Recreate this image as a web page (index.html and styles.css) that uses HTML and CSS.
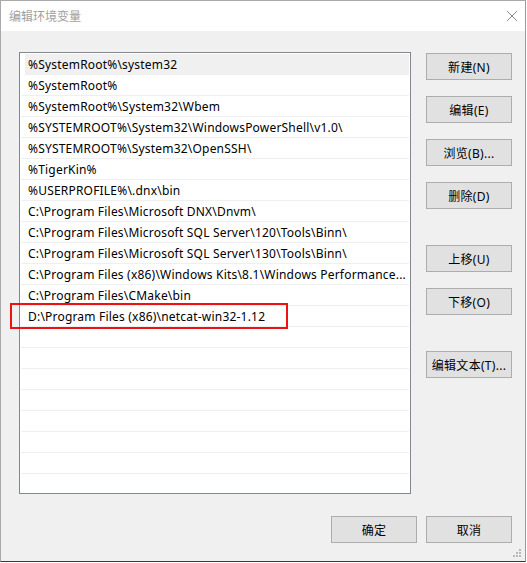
FILE: index.html
```html
<!DOCTYPE html>
<html lang="zh-CN">
<head>
<meta charset="utf-8">
<title>编辑环境变量</title>
<link rel="stylesheet" href="styles.css">
</head>
<body>
<div class="window">
  <div class="titlebar">
    <span class="title">编辑环境变量</span>
    <svg class="close" width="12" height="12" viewBox="0 0 12 12"><path d="M1 1 L11 11 M11 1 L1 11" stroke="#8a8a8a" stroke-width="1" fill="none"/></svg>
  </div>
  <div class="main">
    <div class="list">
      <div class="row selected">%SystemRoot%\system32</div>
      <div class="row">%SystemRoot%</div>
      <div class="row">%SystemRoot%\System32\Wbem</div>
      <div class="row">%SYSTEMROOT%\System32\WindowsPowerShell\v1.0\</div>
      <div class="row">%SYSTEMROOT%\System32\OpenSSH\</div>
      <div class="row">%TigerKin%</div>
      <div class="row">%USERPROFILE%\.dnx\bin</div>
      <div class="row">C:\Program Files\Microsoft DNX\Dnvm\</div>
      <div class="row">C:\Program Files\Microsoft SQL Server\120\Tools\Binn\</div>
      <div class="row">C:\Program Files\Microsoft SQL Server\130\Tools\Binn\</div>
      <div class="row">C:\Program Files (x86)\Windows Kits\8.1\Windows Performance...</div>
      <div class="row">C:\Program Files\CMake\bin</div>
      <div class="row">D:\Program Files (x86)\netcat-win32-1.12</div>
      <div class="row"></div>
      <div class="row"></div>
      <div class="row"></div>
      <div class="row"></div>
      <div class="row"></div>
      <div class="row"></div>
      <div class="row"></div>
      <div class="row"></div>
    </div>
    <div class="side">
      <button class="btn">新建(N)</button>
      <button class="btn">编辑(E)</button>
      <button class="btn">浏览(B)...</button>
      <button class="btn">删除(D)</button>
      <button class="btn far">上移(U)</button>
      <button class="btn">下移(O)</button>
      <button class="btn far">编辑文本(T)...</button>
    </div>
  </div>
  <div class="footer">
    <button class="btn">确定</button>
    <button class="btn">取消</button>
  </div>
  <div class="highlight"></div>
  <svg class="grip" width="10" height="10" viewBox="0 0 10 10">
    <rect x="6" y="0" width="2" height="2" fill="#b8b8b8"/>
    <rect x="3" y="3" width="2" height="2" fill="#b8b8b8"/>
    <rect x="6" y="3" width="2" height="2" fill="#b8b8b8"/>
    <rect x="0" y="6" width="2" height="2" fill="#b8b8b8"/>
    <rect x="3" y="6" width="2" height="2" fill="#b8b8b8"/>
    <rect x="6" y="6" width="2" height="2" fill="#b8b8b8"/>
  </svg>
</div>
</body>
</html>
```

FILE: styles.css
```css
html, body {
  margin: 0;
  padding: 0;
  background: #ffffff;
}

body {
  font-family: "Noto Sans", "Noto Sans CJK SC", sans-serif;
  font-size: 12px;
  color: #000;
}

.window {
  position: relative;
  box-sizing: border-box;
  width: 526px;
  height: 562px;
  border-left: 1px solid #a9a9a9;
  border-top: 1px solid #a9a9a9;
  border-right: 1px solid #9a9a9a;
  border-bottom: 1px solid #2e3b4b;
  background: #f0f0f0;
  display: flex;
  flex-direction: column;
  overflow: hidden;
}

.titlebar {
  height: 30px;
  background: #ffffff;
  display: flex;
  align-items: center;
  justify-content: space-between;
  padding: 0 8px 0 8px;
  flex-shrink: 0;
}

.title {
  color: #a0a0a0;
  font-family: "Noto Sans CJK SC", sans-serif;
  font-size: 12px;
  line-height: 14px;
}

.close {
  display: block;
  margin-right: -1px;
}

.main {
  display: flex;
  padding: 21px 0 0 18px;
}

.list {
  box-sizing: border-box;
  width: 392px;
  height: 442px;
  border: 1px solid #828790;
  background: #ffffff;
  overflow: hidden;
  padding: 1px 1px 0 1px;
}

.row {
  height: 20px;
  line-height: 21px;
  border-bottom: 1px solid #efefef;
  padding-left: 7px;
  white-space: nowrap;
  overflow: hidden;
  letter-spacing: 0.2px;
}

.row.selected {
  background: #f0f0f0;
  margin-left: 4px;
  padding-left: 3px;
}

.side {
  display: flex;
  flex-direction: column;
  margin-left: 15px;
  padding-top: 1px;
}

.btn {
  box-sizing: border-box;
  width: 86px;
  height: 27px;
  margin: 0 0 16px 0;
  padding: 0;
  border: 1px solid #adadad;
  background: #e1e1e1;
  font-family: "Noto Sans", "Noto Sans CJK SC", sans-serif;
  font-size: 12px;
  letter-spacing: 0.3px;
  color: #000;
  text-align: center;
}

.btn.far {
  margin-top: 20px;
}

.footer {
  display: flex;
  justify-content: flex-end;
  gap: 9px;
  padding: 22px 13px 0 0;
}

.footer .btn {
  margin: 0;
}

.highlight {
  position: absolute;
  left: 9px;
  top: 302px;
  width: 278px;
  height: 26px;
  box-sizing: border-box;
  border: 2px solid #ee1111;
}

.grip {
  position: absolute;
  right: 2px;
  bottom: 2px;
}
```
